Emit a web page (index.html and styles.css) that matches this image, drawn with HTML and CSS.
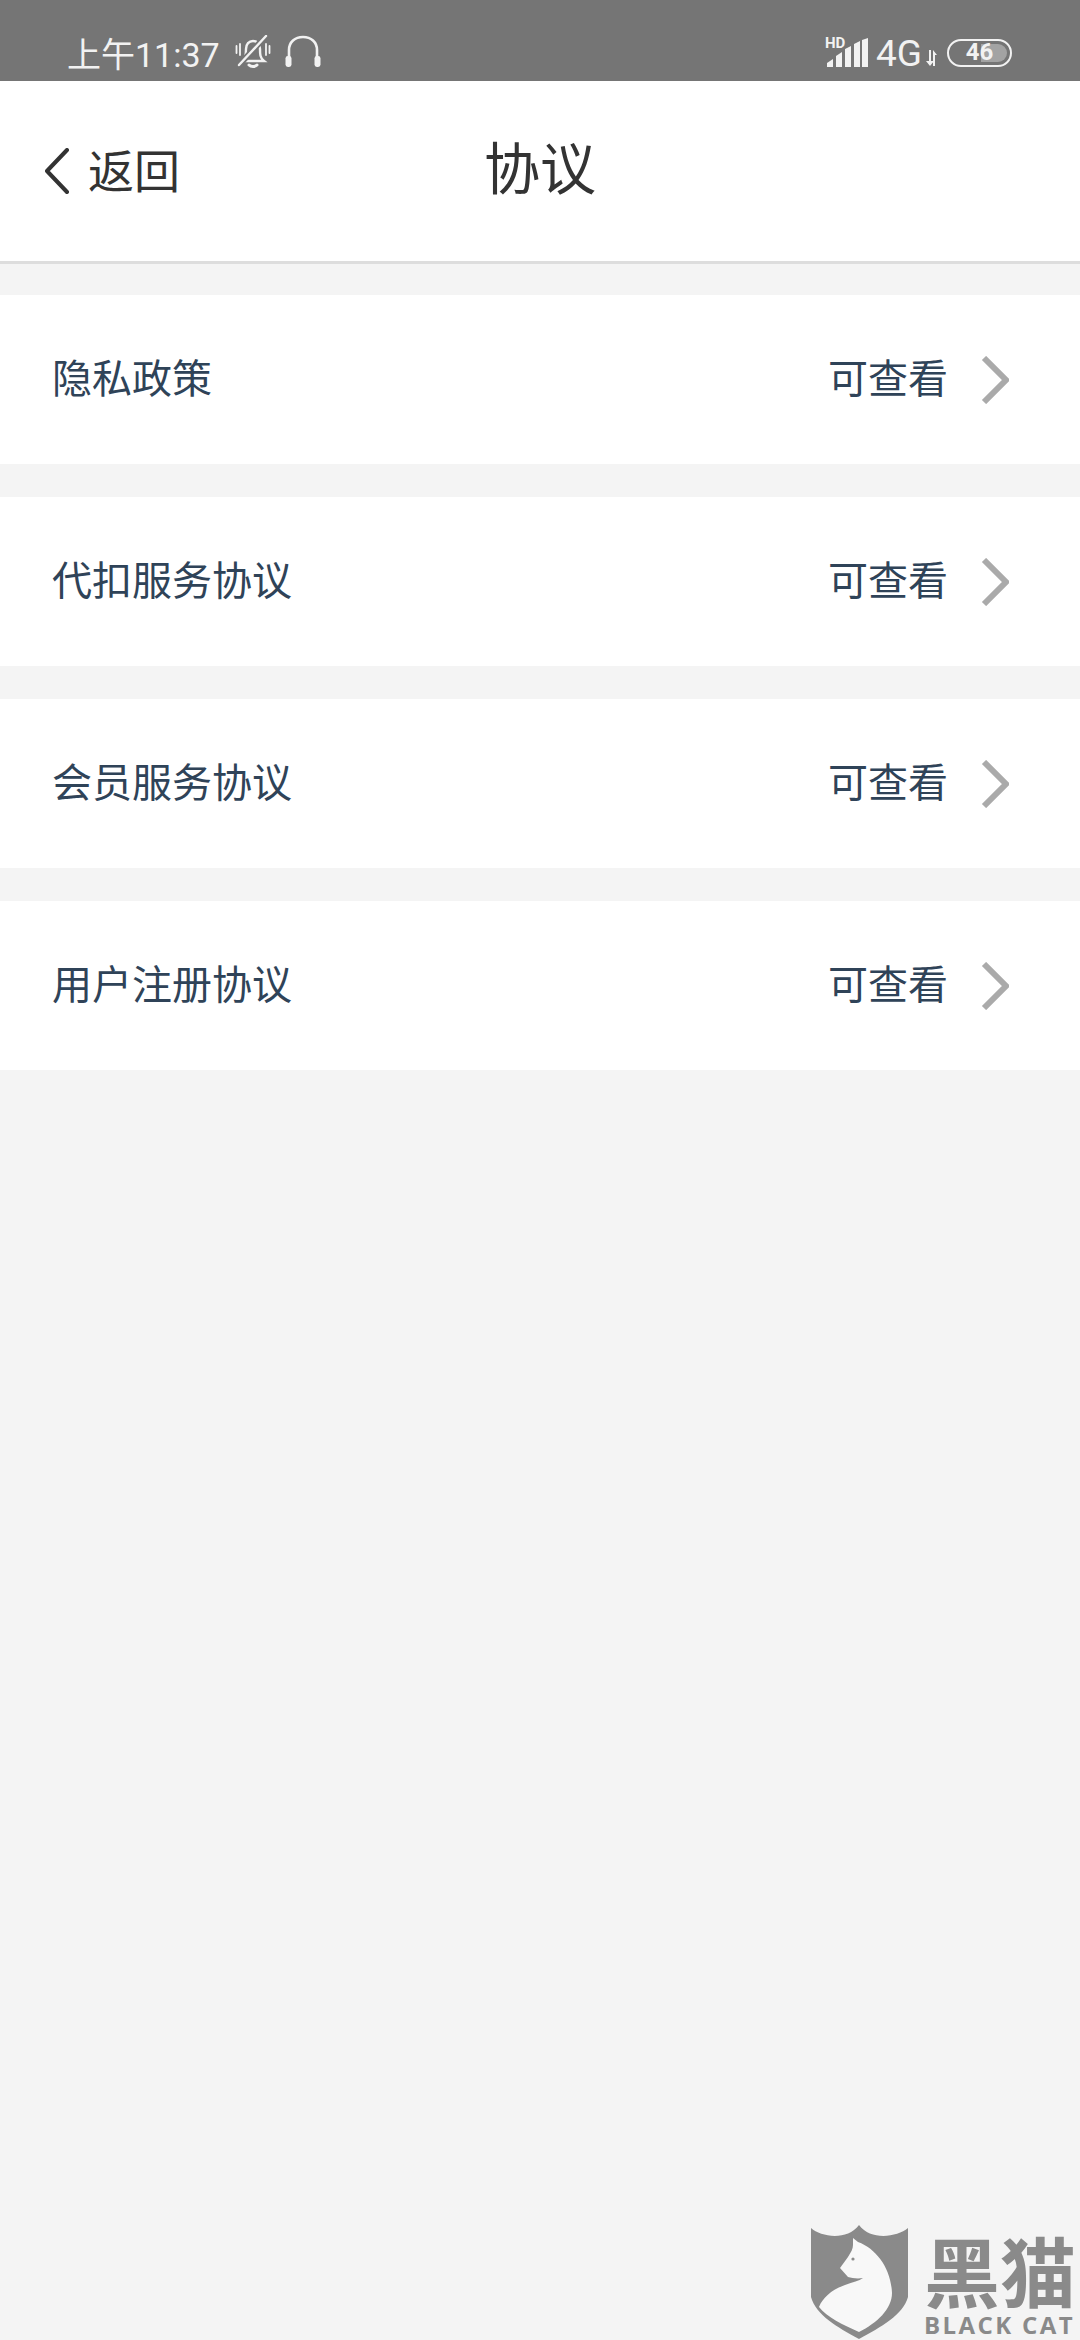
FILE: index.html
```html
<!DOCTYPE html>
<html lang="zh-CN">
<head>
    <meta charset="UTF-8">
    <meta name="viewport" content="width=device-width, initial-scale=1.0">
    <title>协议</title>
    <link rel="stylesheet" href="styles.css">
</head>
<body>
    <div class="status-bar">
        <div class="status-left">
            <span class="status-time">上午11:37</span>
            <svg class="icon-bell" width="36" height="34" viewBox="0 0 36 34" fill="none" stroke="#f2f2f2" stroke-width="2.4" stroke-linecap="round">
                <path d="M8 26c3-3 3-7 3-12 0-5 3-8 7-8s7 3 7 8c0 5 0 9 4 12z"/>
                <path d="M14 30c2 2 6 2 8 0" stroke-width="3"/>
                <path d="M1.5 11v7M5 9v11M31 9v11M34.5 11v7" stroke-width="1.8"/>
                <path d="M5 29L30 2" stroke="#757575" stroke-width="6"/>
                <path d="M4 30L31 1"/>
            </svg>
            <svg class="icon-headset" width="36" height="34" viewBox="0 0 36 34" fill="none" stroke="#f2f2f2" stroke-width="2.6" stroke-linecap="round">
                <path d="M4 24V15C4 7 10 2 18 2s14 5 14 13v9"/>
                <rect x="0.5" y="21" width="6" height="11" rx="2.4" fill="#f2f2f2" stroke="none"/>
                <rect x="29.5" y="21" width="6" height="11" rx="2.4" fill="#f2f2f2" stroke="none"/>
            </svg>
        </div>
        <div class="status-right">
            <div class="signal">
                <span class="signal-hd">HD</span>
                <svg width="41" height="29" viewBox="0 0 41 29" fill="#f2f2f2">
                    <path d="M0 29v-4l6-4v8zM9 29V18l6-4v15zM18 29V11l6-3v21zM27 29V6l6-3v26zM35 29V2l6-2v29z"/>
                </svg>
            </div>
            <span class="network">4G</span>
            <svg class="net-arrows" width="13" height="16" viewBox="0 0 13 16" fill="#f2f2f2">
                <path d="M4 0h2v11h3l-4 5-4-5h3zM8 0l4 5h-2v11H8z"/>
            </svg>
            <div class="battery">
                <div class="battery-fill"></div>
                <span class="battery-num">46</span>
            </div>
        </div>
    </div>

    <div class="nav-bar">
        <div class="nav-back">
            <svg width="26" height="46" viewBox="0 0 26 46" fill="none" stroke="#333" stroke-width="4" stroke-linecap="round" stroke-linejoin="round">
                <path d="M23 2L3 23l20 21"/>
            </svg>
            <span>返回</span>
        </div>
        <div class="nav-title">协议</div>
        <div></div>
    </div>

    <div class="list">
        <div class="list-row">
            <span class="row-name">隐私政策</span>
            <span class="row-state">可查看</span>
            <svg class="row-arrow" width="28" height="48" viewBox="0 0 28 48" fill="none" stroke="#aaaaaa" stroke-width="6">
                <path d="M3 2l22 22L3 46"/>
            </svg>
        </div>
        <div class="list-row">
            <span class="row-name">代扣服务协议</span>
            <span class="row-state">可查看</span>
            <svg class="row-arrow" width="28" height="48" viewBox="0 0 28 48" fill="none" stroke="#aaaaaa" stroke-width="6">
                <path d="M3 2l22 22L3 46"/>
            </svg>
        </div>
        <div class="list-row">
            <span class="row-name">会员服务协议</span>
            <span class="row-state">可查看</span>
            <svg class="row-arrow" width="28" height="48" viewBox="0 0 28 48" fill="none" stroke="#aaaaaa" stroke-width="6">
                <path d="M3 2l22 22L3 46"/>
            </svg>
        </div>
        <div class="list-row">
            <span class="row-name">用户注册协议</span>
            <span class="row-state">可查看</span>
            <svg class="row-arrow" width="28" height="48" viewBox="0 0 28 48" fill="none" stroke="#aaaaaa" stroke-width="6">
                <path d="M3 2l22 22L3 46"/>
            </svg>
        </div>
    </div>

    <!-- watermark sits over the page corner -->
    <div class="watermark">
        <svg class="watermark-shield" width="97" height="114" viewBox="0 0 97 114">
            <path fill="#8a8a8a" d="M0 3C10 12 36 16 48 0C60 16 86 12 97 3V72C92 90 70 102 48 114C26 102 5 90 0 72z"/>
            <path fill="#f8f8f8" d="M42 13L47 17C66 24 80 44 81 68C81 84 66 98 48 107C32 100 16 92 8 82C12 72 22 64 34 60C42 57 48 56 52 53C46 54 41 53 37 52L29 43L37 32C40 27 42 24 42 20z"/>
            <circle cx="42" cy="34" r="1.6" fill="#8a8a8a"/>
        </svg>
        <div class="watermark-text">
            <div class="watermark-cn">黑猫</div>
            <div class="watermark-en">BLACK CAT</div>
        </div>
    </div>
</body>
</html>
```

FILE: styles.css
```css
html, body {
    margin: 0;
    padding: 0;
}
body {
    position: relative;
    width: 1080px;
    height: 2340px;
    overflow: hidden;
    background-color: #f4f4f4;
    font-family: "Noto Sans CJK SC", "Noto Sans", sans-serif;
}
.status-bar {
    display: flex;
    justify-content: space-between;
    align-items: flex-end;
    height: 81px;
    box-sizing: border-box;
    padding: 0 68px 11px 67px;
    background: #757575;
    color: #f2f2f2;
}
.status-left,
.status-right {
    display: flex;
    align-items: flex-end;
}
.status-time {
    font-family: Roboto, "Noto Sans CJK SC", sans-serif;
    font-size: 34px;
    line-height: 30px;
}
.icon-bell {
    margin-left: 15px;
    margin-bottom: 1px;
}
.icon-headset {
    margin-left: 14px;
    margin-bottom: 1px;
}
.signal {
    position: relative;
    width: 41px;
    height: 29px;
    margin-bottom: 3px;
}
.signal svg {
    display: block;
}
.signal-hd {
    position: absolute;
    left: -2px;
    top: -2px;
    font-family: Roboto, sans-serif;
    font-size: 15px;
    line-height: 15px;
    font-weight: 700;
}
.network {
    margin-left: 8px;
    font-family: Roboto, sans-serif;
    font-size: 37px;
    line-height: 32px;
}
.net-arrows {
    margin-left: 3px;
    margin-bottom: 4px;
}
.battery {
    position: relative;
    width: 65px;
    height: 28px;
    box-sizing: border-box;
    margin-left: 9px;
    margin-bottom: 3px;
    border: 2.5px solid #f2f2f2;
    border-radius: 14px;
    text-align: center;
}
.battery-fill {
    position: absolute;
    top: 3px;
    right: 3px;
    bottom: 3px;
    width: 26px;
    border-radius: 0 9px 9px 0;
    background: #a3a3a3;
}
.battery-num {
    position: relative;
    display: block;
    font-family: Roboto, sans-serif;
    font-size: 24px;
    line-height: 23px;
    font-weight: 700;
}
.nav-bar {
    display: grid;
    grid-template-columns: 1fr auto 1fr;
    align-items: center;
    height: 180px;
    background: #fff;
    border-bottom: 3px solid #dddddd;
    color: #333;
}
.nav-back {
    display: flex;
    align-items: center;
    padding-left: 44px;
    font-size: 46px;
    line-height: 60px;
}
.nav-back span {
    margin-left: 18px;
    margin-bottom: 6px;
}
.nav-title {
    margin-bottom: 12px;
    font-size: 56px;
    line-height: 70px;
}
.list {
    display: flex;
    flex-direction: column;
    gap: 33px;
    margin-top: 31px;
}
.list-row {
    display: flex;
    align-items: center;
    height: 169px;
    padding: 0 71px 0 52px;
    background: #fff;
    color: #2f4358;
    font-size: 40px;
}
.row-name,
.row-state {
    margin-bottom: 8px;
}
.row-name {
    flex: 1;
}
.row-arrow {
    margin-left: 33px;
}
.watermark {
    position: absolute;
    left: 811px;
    top: 2225px;
    display: flex;
    color: #8a8a8a;
}
.watermark-shield {
    display: block;
}
.watermark-text {
    margin-left: 16px;
    padding-top: 2px;
}
.watermark-cn {
    font-size: 76px;
    line-height: 84px;
    font-weight: 700;
    white-space: nowrap;
}
.watermark-en {
    margin-top: 1px;
    font-family: "Open Sans", sans-serif;
    font-size: 24px;
    line-height: 26px;
    font-weight: 700;
    letter-spacing: 2.4px;
    white-space: nowrap;
}
```
